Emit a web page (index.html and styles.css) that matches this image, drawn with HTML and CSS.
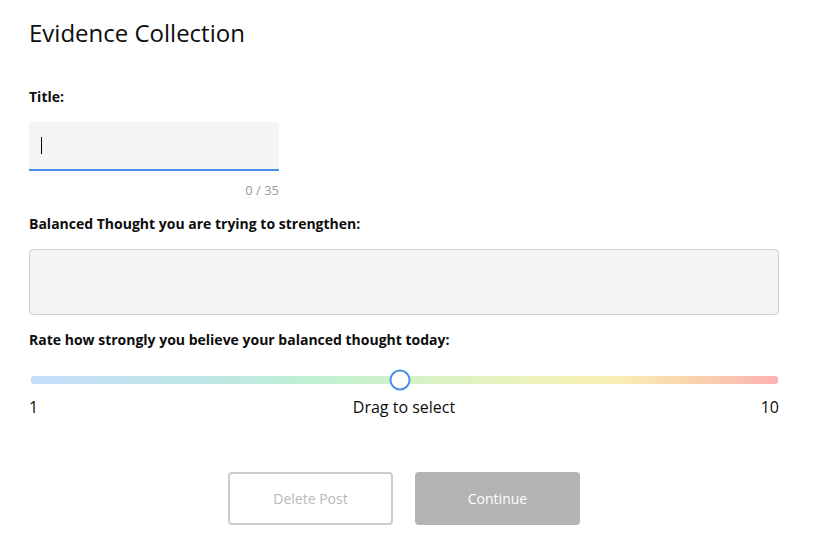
FILE: index.html
```html
<!DOCTYPE html>
<html lang="en">
<head>
<meta charset="utf-8">
<title>Evidence Collection</title>
<link rel="stylesheet" href="styles.css">
</head>
<body>
<main class="page">
  <h1 class="heading">Evidence Collection</h1>

  <label class="label label-title">Title:</label>
  <div class="text-input">
    <span class="caret"></span>
  </div>
  <div class="counter">0 / 35</div>

  <label class="label label-balanced">Balanced Thought you are trying to strengthen:</label>
  <div class="textarea"></div>

  <label class="label label-rate">Rate how strongly you believe your balanced thought today:</label>
  <div class="slider">
    <div class="track">
      <div class="thumb" style="left: 49.4%"></div>
    </div>
    <div class="scale">
      <span class="scale-min">1</span>
      <span class="scale-hint">Drag to select</span>
      <span class="scale-max">10</span>
    </div>
  </div>

  <div class="actions">
    <button class="btn btn-outline" type="button">Delete Post</button>
    <button class="btn btn-filled" type="button">Continue</button>
  </div>
</main>
</body>
</html>
```

FILE: styles.css
```css
html, body {
  margin: 0;
  padding: 0;
  background: #ffffff;
}

body {
  font-family: "Open Sans", "Liberation Sans", sans-serif;
  color: #0d0d0d;
}

.page {
  width: 750px;
  padding: 17px 0 0 29px;
  display: flex;
  flex-direction: column;
}

.heading {
  margin: 0;
  font-size: 24px;
  line-height: 32px;
  font-weight: 400;
  color: #0d0d0d;
}

.label {
  display: block;
  font-size: 14px;
  line-height: 20px;
  font-weight: 700;
  color: #0d0d0d;
}

.label-title {
  margin-top: 38px;
}

.text-input {
  margin-top: 15px;
  width: 250px;
  height: 49px;
  box-sizing: border-box;
  background: #f4f4f4;
  border-bottom: 2px solid #4790ea;
  border-radius: 4px 4px 0 0;
  display: flex;
  align-items: center;
  padding-left: 12px;
}

.caret {
  display: block;
  width: 1px;
  height: 17px;
  background: #000000;
}

.counter {
  margin-top: 12px;
  width: 250px;
  text-align: right;
  font-size: 13px;
  line-height: 14px;
  color: #9b9b9b;
}

.label-balanced {
  margin-top: 17px;
}

.textarea {
  margin-top: 15px;
  height: 66px;
  box-sizing: border-box;
  border: 1px solid #cfcfcf;
  border-radius: 4px;
  background: #f4f4f4;
}

.label-rate {
  margin-top: 15px;
}

.slider {
  margin-top: 26px;
  display: flex;
  flex-direction: column;
}

.track {
  position: relative;
  margin-left: 2px;
  margin-right: 1px;
  height: 8px;
  border-radius: 3px;
  background: linear-gradient(to right,
    #c5ddfa 0%,
    #bde7e3 25%,
    #bff1d3 38%,
    #d6f2c5 52%,
    #eef2bb 68%,
    #f8f0b4 78%,
    #f9d5ae 88%,
    #fdb2b2 100%);
}

.thumb {
  position: absolute;
  top: 50%;
  width: 21px;
  height: 21px;
  box-sizing: border-box;
  border: 2px solid #4a90e6;
  border-radius: 50%;
  background: #ffffff;
  transform: translate(-50%, -50%);
}

.scale {
  margin-top: 13px;
  display: flex;
  justify-content: space-between;
  font-size: 16px;
  line-height: 20px;
  color: #0d0d0d;
}

.scale-min,
.scale-max {
  width: 40px;
}

.scale-min {
  letter-spacing: -2px;
}

.scale-max {
  text-align: right;
}

.actions {
  margin-top: 55px;
  display: flex;
  justify-content: center;
  gap: 22px;
}

.btn {
  width: 165px;
  height: 53px;
  box-sizing: border-box;
  border-radius: 4px;
  font-family: "Open Sans", "Liberation Sans", sans-serif;
  font-size: 14px;
  cursor: pointer;
}

.btn-outline {
  background: #ffffff;
  border: 2px solid #cccccc;
  color: #b9b9b9;
}

.btn-filled {
  background: #b3b3b3;
  border: none;
  color: #ffffff;
}
```
